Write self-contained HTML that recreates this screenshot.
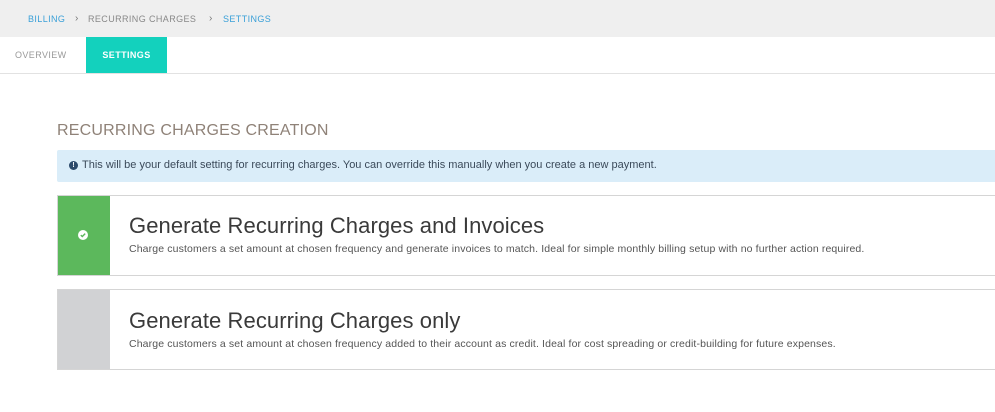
<!DOCTYPE html><html><head><style>
body{margin:0;width:995px;height:412px;background:#fff;font-family:"Liberation Sans",sans-serif;position:relative;overflow:hidden}
.a{position:absolute}
.h{font-size:22px;color:#3a3a3a;letter-spacing:.08px;font-weight:300}
.d{font-size:10.5px;color:#555;letter-spacing:.13px}
</style></head><body>
<div class="a" style="left:0;top:0;width:995px;height:37px;background:#efefef"></div>
<div class="a" style="left:28px;top:14px;font-size:9px;letter-spacing:.4px;color:#3aa0d8">BILLING</div>
<div class="a" style="left:75px;top:13px;font-size:10px;color:#777">›</div>
<div class="a" style="left:88px;top:14px;font-size:9px;letter-spacing:.4px;color:#888">RECURRING CHARGES</div>
<div class="a" style="left:209px;top:13px;font-size:10px;color:#777">›</div>
<div class="a" style="left:223px;top:14px;font-size:9px;letter-spacing:.4px;color:#3aa0d8">SETTINGS</div>
<div class="a" style="left:15px;top:50px;font-size:9px;letter-spacing:.4px;color:#999">OVERVIEW</div>
<div class="a" style="left:86px;top:37px;width:81px;height:36px;background:#13d1bd;color:#fff;font-size:9px;font-weight:bold;letter-spacing:.4px;text-align:center;line-height:36px">SETTINGS</div>
<div class="a" style="left:0;top:73px;width:995px;height:1px;background:#e2e2e2"></div>
<div class="a" style="left:57px;top:122px;font-size:16px;color:#8f8278;letter-spacing:.2px">RECURRING CHARGES CREATION</div>
<div class="a" style="left:57px;top:150px;width:940px;height:32px;background:#daedf9;border-radius:2px"></div>
<div class="a" style="left:69px;top:161px;width:9px;height:9px;border-radius:50%;background:#2b4a6b;color:#fff;font-size:7px;font-weight:bold;text-align:center;line-height:9px">!</div>
<div class="a" style="left:82px;top:159px;font-size:11px;color:#3b4a5a">This will be your default setting for recurring charges. You can override this manually when you create a new payment.</div>
<div class="a" style="left:57px;top:195px;width:940px;height:79px;border:1px solid #d5d5d5;border-right:none"></div>
<div class="a" style="left:58px;top:196px;width:52px;height:79px;background:#5cb85c"></div>
<svg class="a" style="left:78px;top:230px" width="10" height="10" viewBox="0 0 10 10"><circle cx="5" cy="5" r="5" fill="#fff"/><path d="M2.8 5.1 L4.3 6.5 L7.2 3.6" stroke="#5cb85c" stroke-width="1.4" fill="none"/></svg>
<div class="a h" style="left:129px;top:213px">Generate Recurring Charges and Invoices</div>
<div class="a d" style="left:129px;top:243px">Charge customers a set amount at chosen frequency and generate invoices to match. Ideal for simple monthly billing setup with no further action required.</div>
<div class="a" style="left:57px;top:289px;width:940px;height:79px;border:1px solid #d5d5d5;border-right:none"></div>
<div class="a" style="left:58px;top:290px;width:52px;height:79px;background:#d1d2d4"></div>
<div class="a h" style="left:129px;top:308px">Generate Recurring Charges only</div>
<div class="a d" style="left:129px;top:338px">Charge customers a set amount at chosen frequency added to their account as credit. Ideal for cost spreading or credit-building for future expenses.</div>
</body></html>
